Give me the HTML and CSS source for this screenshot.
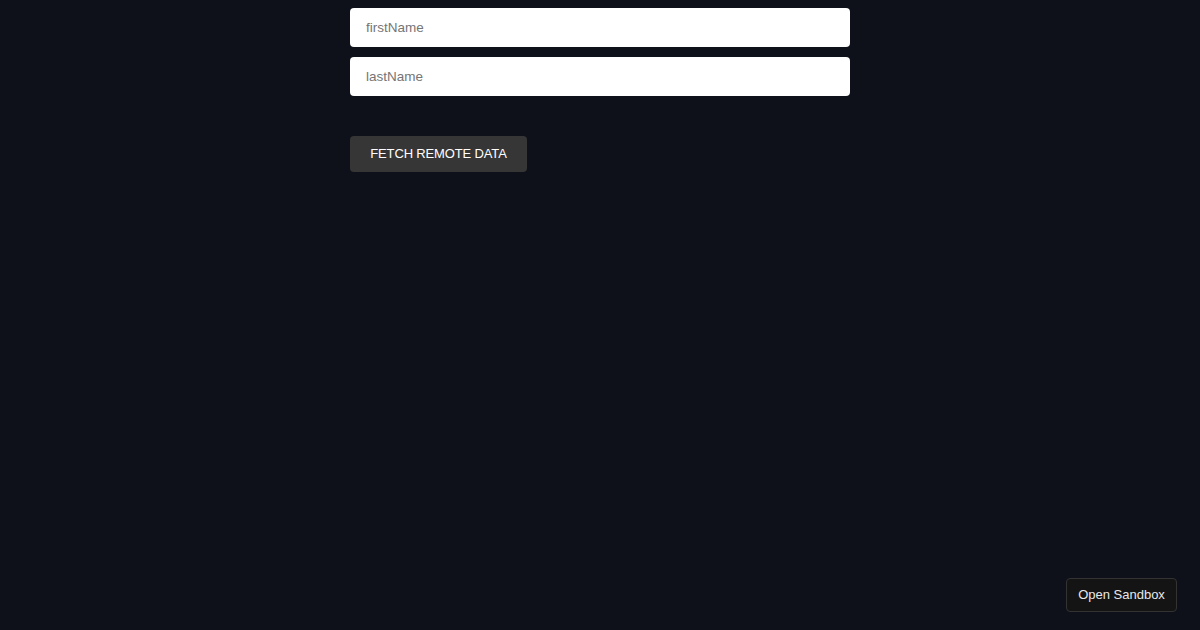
FILE: index.html
```html
<!DOCTYPE html>
<html>
<head>
<meta charset="utf-8">
<link rel="stylesheet" href="styles.css">
</head>
<body>
<main class="page">
  <form class="form">
    <input class="field" type="text" placeholder="firstName">
    <input class="field" type="text" placeholder="lastName">
    <button class="fetch" type="button">FETCH REMOTE DATA</button>
  </form>
</main>
<a class="sandbox">Open Sandbox</a>
</body>
</html>
```
FILE: styles.css
```css
html, body {
  margin: 0;
  padding: 0;
  height: 100%;
  background: #0e101a;
  font-family: "Liberation Sans", Arial, sans-serif;
}
.page {
  display: flex;
  justify-content: center;
  padding-top: 8px;
}
.form {
  width: 500px;
  display: flex;
  flex-direction: column;
  align-items: flex-start;
}
.field {
  box-sizing: border-box;
  width: 100%;
  height: 39px;
  margin: 0 0 10px 0;
  padding: 0 16px 1px;
  border: none;
  border-radius: 4px;
  background: #ffffff;
  font-family: "Liberation Sans", Arial, sans-serif;
  font-size: 13.5px;
  color: #333;
  outline: none;
}
.field::placeholder {
  color: #757575;
}
.fetch {
  margin-top: 30px;
  height: 36px;
  width: 177px;
  padding: 0 0 2px;
  border: none;
  border-radius: 4px;
  background: #363636;
  color: #ffffff;
  font-family: "Liberation Sans", Arial, sans-serif;
  font-size: 13px;
  letter-spacing: -0.15px;
}
.sandbox {
  position: fixed;
  right: 23px;
  bottom: 18px;
  box-sizing: border-box;
  height: 34px;
  width: 111px;
  padding-bottom: 2px;
  display: flex;
  align-items: center;
  justify-content: center;
  background: #141414;
  border: 1px solid #333;
  border-radius: 4px;
  color: #e8e8e8;
  font-family: "Liberation Sans", Arial, sans-serif;
  font-size: 13px;
}
```
